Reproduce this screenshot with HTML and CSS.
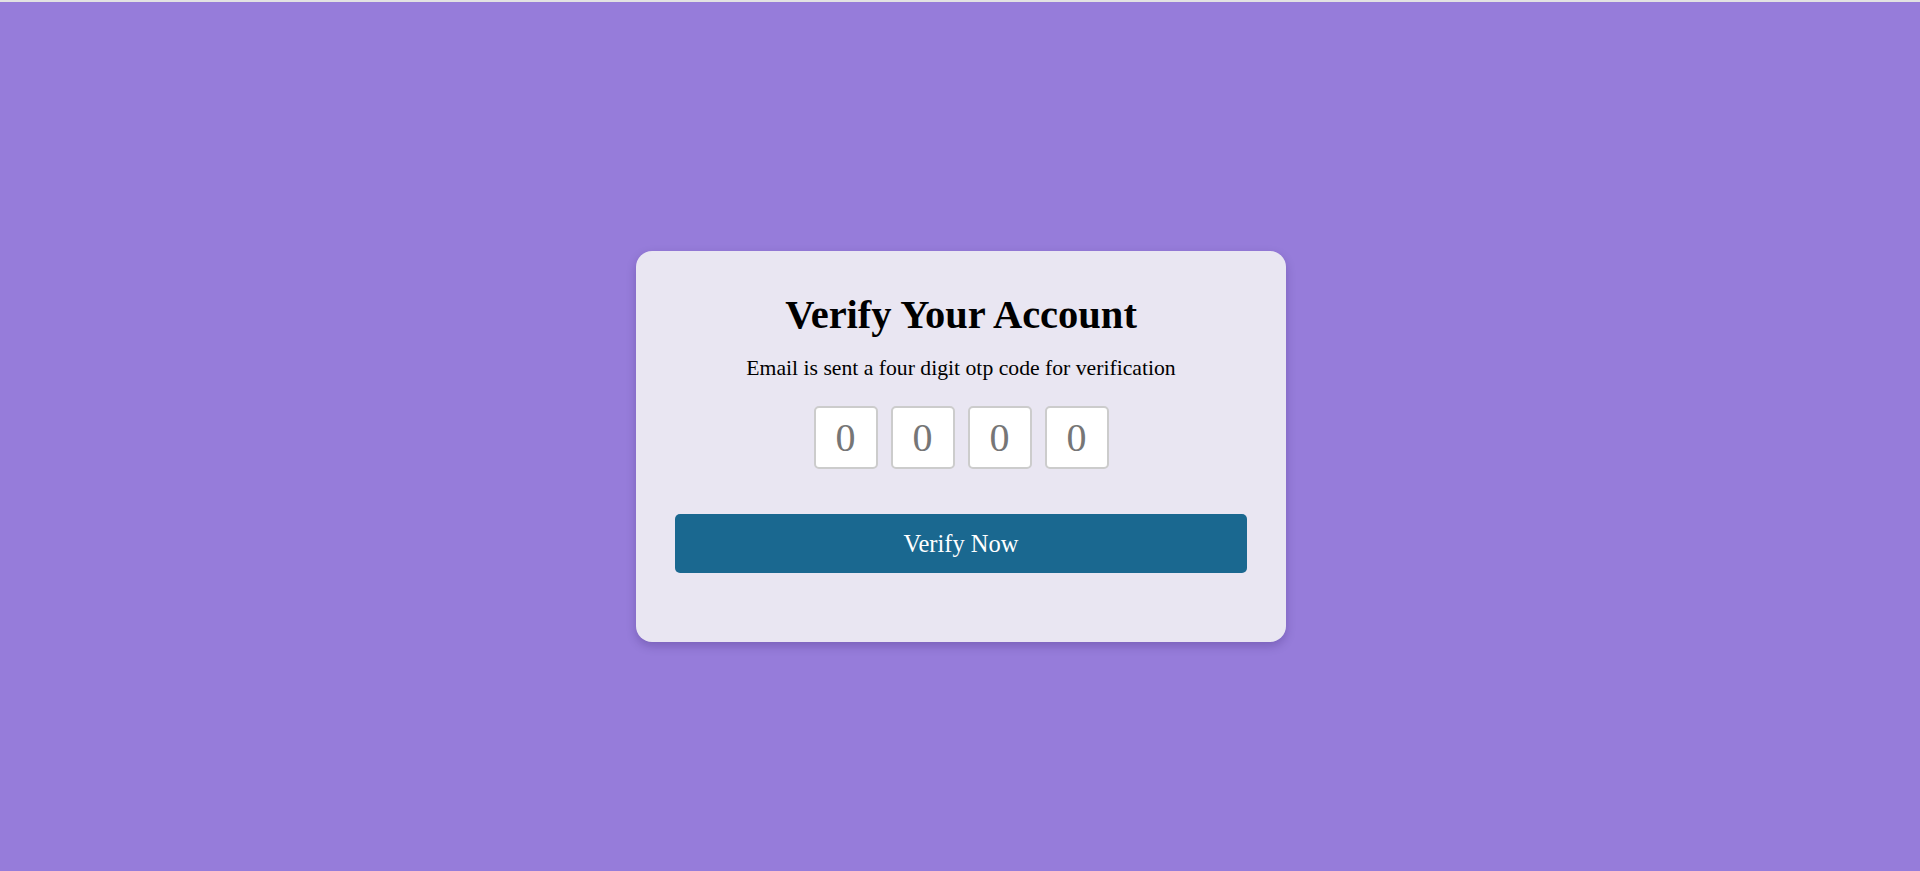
FILE: index.html
```html
<!DOCTYPE html>
<html lang="en">
<head>
<meta charset="utf-8">
<title>Verify Your Account</title>
<link rel="stylesheet" href="styles.css">
</head>
<body>
<main class="page">
  <form class="card">
    <h1 class="title">Verify Your Account</h1>
    <p class="subtitle">Email is sent a four digit otp code for verification</p>
    <div class="otp">
      <input class="otp-box" type="text" maxlength="1" placeholder="0">
      <input class="otp-box" type="text" maxlength="1" placeholder="0">
      <input class="otp-box" type="text" maxlength="1" placeholder="0">
      <input class="otp-box" type="text" maxlength="1" placeholder="0">
    </div>
    <button class="verify-btn" type="button">Verify Now</button>
  </form>
</main>
</body>
</html>
```
FILE: styles.css
```css
html, body {
  margin: 0;
  padding: 0;
}
body {
  background: #967cda;
  border-top: 2px solid #e2e2e2;
  font-family: "Liberation Serif", "Times New Roman", serif;
}
.page {
  min-height: calc(100vh - 2px);
  box-sizing: border-box;
  padding-top: 20px;
  padding-left: 2px;
  display: flex;
  align-items: center;
  justify-content: center;
}
.card {
  width: 650px;
  box-sizing: border-box;
  padding: 40px 39px 69px;
  background: #e9e6f2;
  border-radius: 16px;
  box-shadow: 0 4px 10px rgba(40, 20, 90, 0.25);
  display: flex;
  flex-direction: column;
  align-items: center;
}
.title {
  margin: 0;
  font-size: 40.5px;
  line-height: 47px;
  font-weight: bold;
  color: #000;
}
.subtitle {
  margin: 17px 0 0;
  font-size: 21.7px;
  line-height: 26px;
  color: #000;
}
.otp {
  margin-top: 25px;
  display: flex;
  gap: 13px;
}
.otp-box {
  width: 64px;
  height: 63px;
  box-sizing: border-box;
  margin: 0;
  padding: 0;
  border: 2px solid #cccccc;
  border-radius: 5px;
  background: #ffffff;
  text-align: center;
  font-family: "Liberation Serif", "Times New Roman", serif;
  font-size: 40px;
  color: #333;
  outline: none;
}
.otp-box::placeholder {
  color: #767676;
  opacity: 1;
}
.verify-btn {
  margin-top: 45px;
  width: 100%;
  height: 59px;
  border: none;
  border-radius: 5px;
  background: #1a6890;
  color: #ffffff;
  font-family: "Liberation Serif", "Times New Roman", serif;
  font-size: 24.5px;
  cursor: pointer;
}
```
